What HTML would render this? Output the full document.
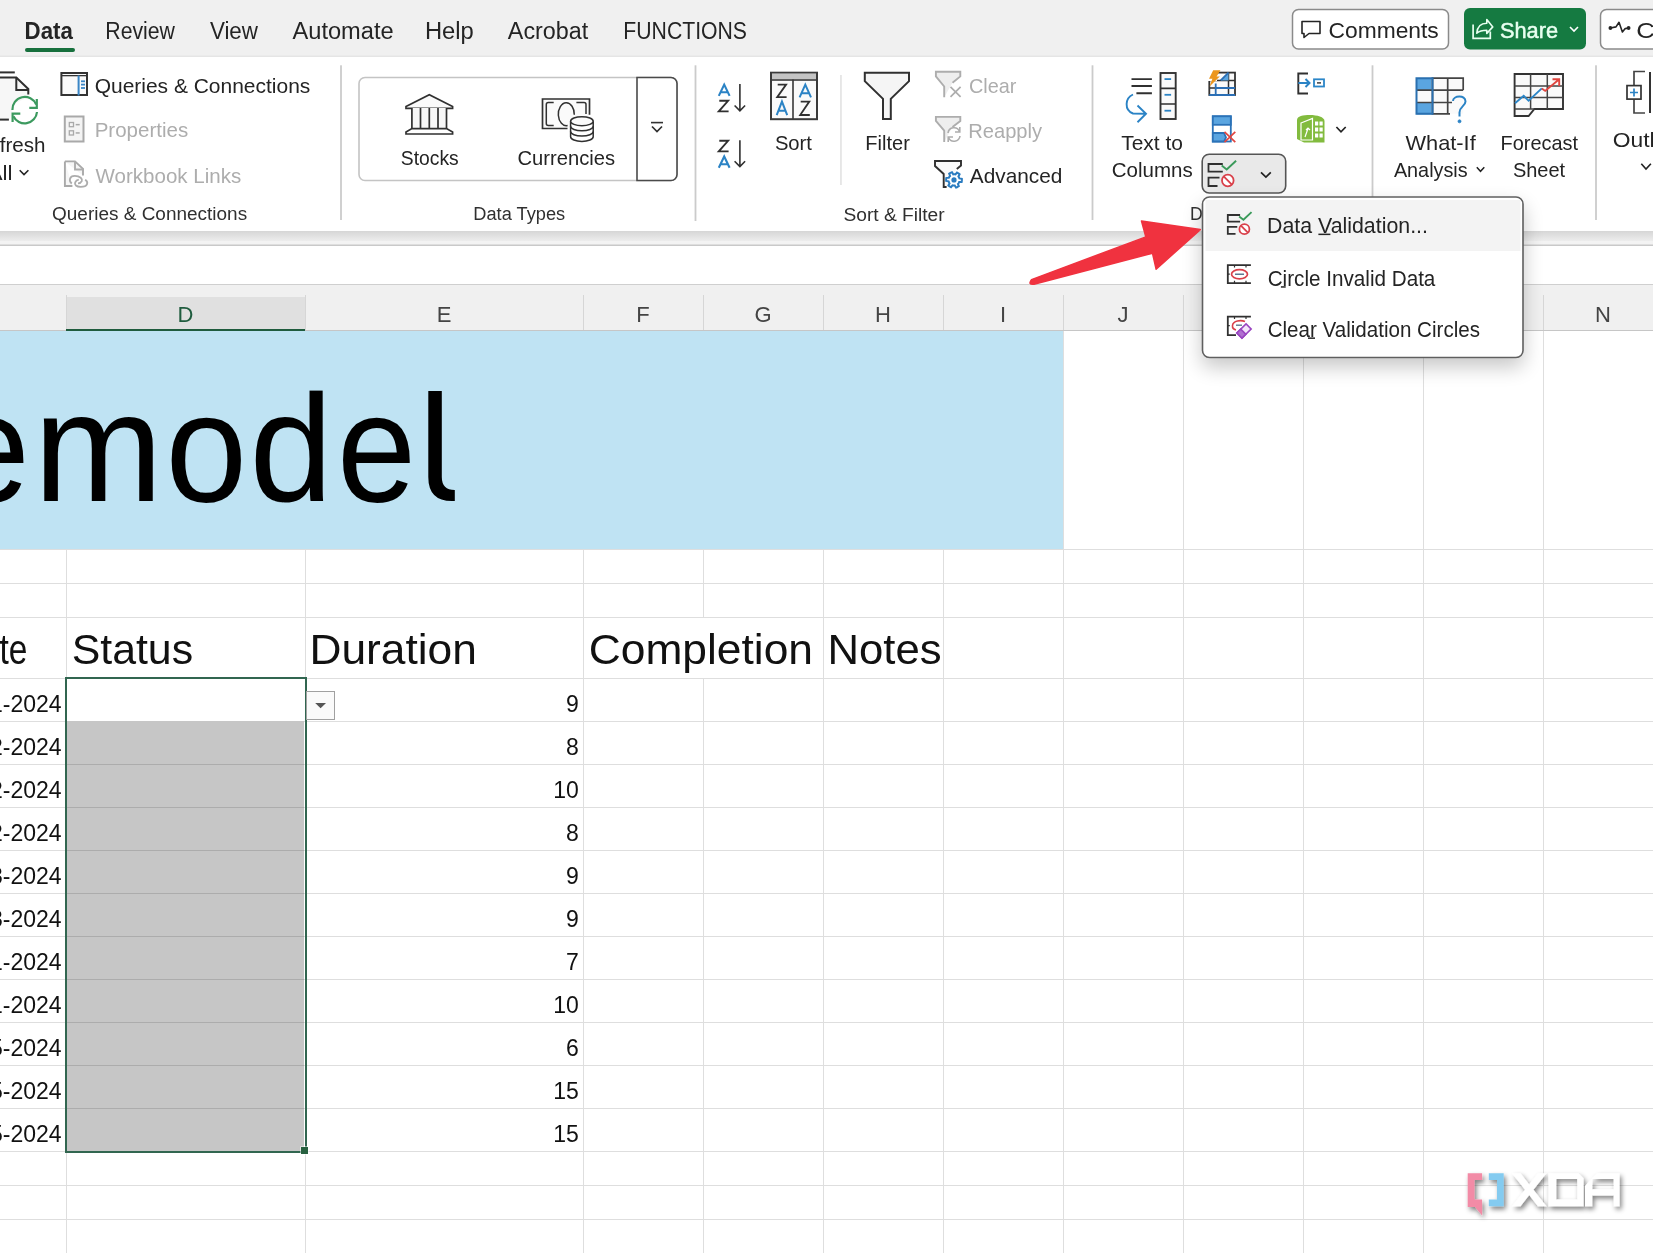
<!DOCTYPE html>
<html><head><meta charset="utf-8"><style>
html,body{margin:0;padding:0;background:#fff;overflow:hidden}
svg{display:block;will-change:transform}
text{font-family:"Liberation Sans",sans-serif}
</style></head><body>
<svg width="1653" height="1253" viewBox="0 0 1653 1253">
<rect x="0" y="0" width="1653" height="57" fill="#f0f0f0"/>
<text x="24.55" y="39" font-size="23" fill="#242424" font-weight="bold" textLength="48.28" lengthAdjust="spacingAndGlyphs">Data</text>
<text x="105.30" y="39" font-size="23" fill="#242424" textLength="69.68" lengthAdjust="spacingAndGlyphs">Review</text>
<text x="209.89" y="39" font-size="23" fill="#242424" textLength="48.10" lengthAdjust="spacingAndGlyphs">View</text>
<text x="292.48" y="39" font-size="23" fill="#242424" textLength="101.19" lengthAdjust="spacingAndGlyphs">Automate</text>
<text x="424.90" y="39" font-size="23" fill="#242424" textLength="48.89" lengthAdjust="spacingAndGlyphs">Help</text>
<text x="507.88" y="39" font-size="23" fill="#242424" textLength="80.27" lengthAdjust="spacingAndGlyphs">Acrobat</text>
<text x="623.30" y="39" font-size="23" fill="#242424" textLength="123.72" lengthAdjust="spacingAndGlyphs">FUNCTIONS</text>
<rect x="25" y="48" width="50" height="4" rx="2" fill="#17703d"/>
<rect x="1292.5" y="9.5" width="156" height="39.5" rx="6" fill="#fff" stroke="#8a8a8a" stroke-width="1.5"/>
<path d="M1302 21.5h18v12h-11l-5 4v-4h-2z" fill="none" stroke="#242424" stroke-width="1.6" stroke-linejoin="round"/>
<text x="1328.46" y="37.5" font-size="22" fill="#242424" textLength="110.33" lengthAdjust="spacingAndGlyphs">Comments</text>
<rect x="1464" y="8" width="122" height="41.5" rx="6" fill="#157a41"/>
<path d="M1473.1 24.6V38.3H1490.3V31.4" fill="none" stroke="#e8fff0" stroke-width="1.7"/>
<path d="M1476.8 33.2C1477.3 26.5 1481 23.2 1486.8 23.2V19.6L1492.8 26.9 1486.8 33.4V30.2C1482.5 30.2 1479.3 31 1476.8 33.2Z" fill="none" stroke="#e8fff0" stroke-width="1.6" stroke-linejoin="round"/>
<text x="1500.02" y="37.5" font-size="22" fill="#e8fff0" textLength="58.04" lengthAdjust="spacingAndGlyphs" stroke="#e8fff0" stroke-width="0.5">Share</text>
<path d="M1570 27l4 4 4-4" fill="none" stroke="#fff" stroke-width="1.6"/>
<rect x="1600.5" y="9.5" width="80" height="39.5" rx="6" fill="#fff" stroke="#8a8a8a" stroke-width="1.5"/>
<path d="M1610.4 28L1616 26.9 1619 22.3 1622.4 32 1625.2 28.6 1628.6 28" fill="none" stroke="#242424" stroke-width="1.6" stroke-linejoin="round"/>
<circle cx="1610.4" cy="28" r="1.9" fill="#242424"/><circle cx="1628.6" cy="28" r="1.9" fill="#242424"/>
<text x="1636.21" y="37.5" font-size="22" fill="#242424" textLength="32.87" lengthAdjust="spacingAndGlyphs">Ca</text>
<rect x="0" y="57" width="1653" height="174" fill="#ffffff"/>
<rect x="0" y="55.5" width="1653" height="1.5" fill="#e5e5e5"/>
<defs><linearGradient id="sh" x1="0" y1="0" x2="0" y2="1"><stop offset="0" stop-color="#d6d6d6"/><stop offset="1" stop-color="#ededed"/></linearGradient></defs>
<rect x="0" y="231" width="1653" height="14" fill="#f3f3f3"/>
<rect x="0" y="231" width="1653" height="10" fill="url(#sh)"/>
<rect x="0" y="244.5" width="1653" height="1.5" fill="#c9c9c9"/>
<rect x="0" y="246" width="1653" height="38" fill="#ffffff"/>
<rect x="0" y="284" width="1653" height="1" fill="#cfcfcf"/>
<rect x="0" y="285" width="1653" height="46" fill="#f0f0f0"/>
<rect x="66" y="297" width="239" height="34" fill="#e0e0e0"/>
<rect x="66" y="295" width="1" height="36" fill="#d6d6d6"/>
<rect x="305" y="295" width="1" height="36" fill="#d6d6d6"/>
<rect x="583" y="295" width="1" height="36" fill="#d6d6d6"/>
<rect x="703" y="295" width="1" height="36" fill="#d6d6d6"/>
<rect x="823" y="295" width="1" height="36" fill="#d6d6d6"/>
<rect x="943" y="295" width="1" height="36" fill="#d6d6d6"/>
<rect x="1063" y="295" width="1" height="36" fill="#d6d6d6"/>
<rect x="1183" y="295" width="1" height="36" fill="#d6d6d6"/>
<rect x="1303" y="295" width="1" height="36" fill="#d6d6d6"/>
<rect x="1423" y="295" width="1" height="36" fill="#d6d6d6"/>
<rect x="1543" y="295" width="1" height="36" fill="#d6d6d6"/>
<rect x="0" y="330" width="1653" height="1" fill="#c6c6c6"/>
<rect x="66" y="329" width="239" height="2" fill="#1f5c3e"/>
<text x="185.5" y="321.5" font-size="22" fill="#1f5c3e" text-anchor="middle">D</text>
<text x="444" y="321.5" font-size="22" fill="#444444" text-anchor="middle">E</text>
<text x="643" y="321.5" font-size="22" fill="#444444" text-anchor="middle">F</text>
<text x="763" y="321.5" font-size="22" fill="#444444" text-anchor="middle">G</text>
<text x="883" y="321.5" font-size="22" fill="#444444" text-anchor="middle">H</text>
<text x="1003" y="321.5" font-size="22" fill="#444444" text-anchor="middle">I</text>
<text x="1123" y="321.5" font-size="22" fill="#444444" text-anchor="middle">J</text>
<text x="1243" y="321.5" font-size="22" fill="#444444" text-anchor="middle">K</text>
<text x="1363" y="321.5" font-size="22" fill="#444444" text-anchor="middle">L</text>
<text x="1483" y="321.5" font-size="22" fill="#444444" text-anchor="middle">M</text>
<text x="1603" y="321.5" font-size="22" fill="#444444" text-anchor="middle">N</text>
<rect x="0" y="331" width="1063" height="218" fill="#bfe3f3"/>
<rect x="0" y="549" width="1653" height="1" fill="#dedede"/>
<rect x="0" y="583" width="1653" height="1" fill="#dedede"/>
<rect x="0" y="617" width="1653" height="1" fill="#dedede"/>
<rect x="0" y="678" width="1653" height="1" fill="#dedede"/>
<rect x="0" y="721" width="1653" height="1" fill="#dedede"/>
<rect x="0" y="764" width="1653" height="1" fill="#dedede"/>
<rect x="0" y="807" width="1653" height="1" fill="#dedede"/>
<rect x="0" y="850" width="1653" height="1" fill="#dedede"/>
<rect x="0" y="893" width="1653" height="1" fill="#dedede"/>
<rect x="0" y="936" width="1653" height="1" fill="#dedede"/>
<rect x="0" y="979" width="1653" height="1" fill="#dedede"/>
<rect x="0" y="1022" width="1653" height="1" fill="#dedede"/>
<rect x="0" y="1065" width="1653" height="1" fill="#dedede"/>
<rect x="0" y="1108" width="1653" height="1" fill="#dedede"/>
<rect x="0" y="1151" width="1653" height="1" fill="#dedede"/>
<rect x="0" y="1185" width="1653" height="1" fill="#dedede"/>
<rect x="0" y="1219" width="1653" height="1" fill="#dedede"/>
<rect x="66" y="549" width="1" height="704" fill="#dedede"/>
<rect x="305" y="549" width="1" height="704" fill="#dedede"/>
<rect x="583" y="549" width="1" height="704" fill="#dedede"/>
<rect x="703" y="549" width="1" height="68" fill="#dedede"/>
<rect x="703" y="678" width="1" height="575" fill="#dedede"/>
<rect x="823" y="549" width="1" height="704" fill="#dedede"/>
<rect x="943" y="549" width="1" height="704" fill="#dedede"/>
<rect x="1063" y="549" width="1" height="704" fill="#dedede"/>
<rect x="1183" y="549" width="1" height="704" fill="#dedede"/>
<rect x="1303" y="549" width="1" height="704" fill="#dedede"/>
<rect x="1423" y="549" width="1" height="704" fill="#dedede"/>
<rect x="1543" y="549" width="1" height="704" fill="#dedede"/>
<rect x="1063" y="331" width="1" height="218" fill="#dedede"/>
<rect x="1183" y="331" width="1" height="218" fill="#dedede"/>
<rect x="1303" y="331" width="1" height="218" fill="#dedede"/>
<rect x="1423" y="331" width="1" height="218" fill="#dedede"/>
<rect x="1543" y="331" width="1" height="218" fill="#dedede"/>
<text x="-49.71" y="501" font-size="155" fill="#000000" textLength="79.51" lengthAdjust="spacingAndGlyphs" stroke="#000000" stroke-width="0.01" stroke-linejoin="round">e</text>
<text x="33.50" y="501" font-size="155" fill="#000000" textLength="129.47" lengthAdjust="spacingAndGlyphs" stroke="#000000" stroke-width="0.01" stroke-linejoin="round">m</text>
<text x="165.44" y="501" font-size="155" fill="#000000" textLength="81.60" lengthAdjust="spacingAndGlyphs" stroke="#000000" stroke-width="0.01" stroke-linejoin="round">o</text>
<text x="249.51" y="501" font-size="155" fill="#000000" textLength="83.29" lengthAdjust="spacingAndGlyphs" stroke="#000000" stroke-width="0.01" stroke-linejoin="round">d</text>
<text x="336.92" y="501" font-size="155" fill="#000000" textLength="79.04" lengthAdjust="spacingAndGlyphs" stroke="#000000" stroke-width="0.01" stroke-linejoin="round">e</text>
<rect x="300" y="380" width="30" height="10.6" fill="#bfe3f3"/>
<path d="M428.3 390.9H441.8V477Q441.8 490 454.8 490V501Q428.3 502.5 428.3 477Z" fill="#000"/>
<text x="-0.50" y="664" font-size="43" fill="#111111" textLength="27.98" lengthAdjust="spacingAndGlyphs">te</text>
<text x="71.67" y="664" font-size="43" fill="#111111" textLength="121.43" lengthAdjust="spacingAndGlyphs">Status</text>
<text x="309.46" y="664" font-size="43" fill="#111111" textLength="167.42" lengthAdjust="spacingAndGlyphs">Duration</text>
<text x="588.78" y="664" font-size="43" fill="#111111" textLength="224.24" lengthAdjust="spacingAndGlyphs">Completion</text>
<text x="827.51" y="664" font-size="43" fill="#111111" textLength="114.13" lengthAdjust="spacingAndGlyphs">Notes</text>
<rect x="67" y="721" width="237" height="430" fill="#c6c6c6"/>
<rect x="67" y="764" width="237" height="1" fill="#acacac"/>
<rect x="67" y="807" width="237" height="1" fill="#acacac"/>
<rect x="67" y="850" width="237" height="1" fill="#acacac"/>
<rect x="67" y="893" width="237" height="1" fill="#acacac"/>
<rect x="67" y="936" width="237" height="1" fill="#acacac"/>
<rect x="67" y="979" width="237" height="1" fill="#acacac"/>
<rect x="67" y="1022" width="237" height="1" fill="#acacac"/>
<rect x="67" y="1065" width="237" height="1" fill="#acacac"/>
<rect x="67" y="1108" width="237" height="1" fill="#acacac"/>
<rect x="66" y="678" width="240" height="474" fill="none" stroke="#316650" stroke-width="2"/>
<rect x="300.5" y="1146.5" width="8" height="8" fill="#fff"/>
<rect x="301" y="1147" width="7" height="7" fill="#27603f"/>
<rect x="306.5" y="691.5" width="28" height="28" fill="#fafafa" stroke="#a0a0a0" stroke-width="1"/>
<path d="M315.2 703h10.8l-5.4 5.2z" fill="#555"/>
<text x="578.8" y="711.6" font-size="23" fill="#111111" text-anchor="end">9</text>
<text x="61.6" y="711.6" font-size="23" fill="#111111" text-anchor="end">01-2024</text>
<text x="578.8" y="754.6" font-size="23" fill="#111111" text-anchor="end">8</text>
<text x="61.6" y="754.6" font-size="23" fill="#111111" text-anchor="end">02-2024</text>
<text x="578.8" y="797.6" font-size="23" fill="#111111" text-anchor="end">10</text>
<text x="61.6" y="797.6" font-size="23" fill="#111111" text-anchor="end">02-2024</text>
<text x="578.8" y="840.6" font-size="23" fill="#111111" text-anchor="end">8</text>
<text x="61.6" y="840.6" font-size="23" fill="#111111" text-anchor="end">02-2024</text>
<text x="578.8" y="883.6" font-size="23" fill="#111111" text-anchor="end">9</text>
<text x="61.6" y="883.6" font-size="23" fill="#111111" text-anchor="end">03-2024</text>
<text x="578.8" y="926.6" font-size="23" fill="#111111" text-anchor="end">9</text>
<text x="61.6" y="926.6" font-size="23" fill="#111111" text-anchor="end">03-2024</text>
<text x="578.8" y="969.6" font-size="23" fill="#111111" text-anchor="end">7</text>
<text x="61.6" y="969.6" font-size="23" fill="#111111" text-anchor="end">01-2024</text>
<text x="578.8" y="1012.6" font-size="23" fill="#111111" text-anchor="end">10</text>
<text x="61.6" y="1012.6" font-size="23" fill="#111111" text-anchor="end">01-2024</text>
<text x="578.8" y="1055.6" font-size="23" fill="#111111" text-anchor="end">6</text>
<text x="61.6" y="1055.6" font-size="23" fill="#111111" text-anchor="end">05-2024</text>
<text x="578.8" y="1098.6" font-size="23" fill="#111111" text-anchor="end">15</text>
<text x="61.6" y="1098.6" font-size="23" fill="#111111" text-anchor="end">05-2024</text>
<text x="578.8" y="1141.6" font-size="23" fill="#111111" text-anchor="end">15</text>
<text x="61.6" y="1141.6" font-size="23" fill="#111111" text-anchor="end">05-2024</text>
<rect x="340.1" y="65.3" width="1.8" height="154.7" fill="#cbcbcb"/>
<rect x="694.6" y="65.3" width="1.8" height="155.7" fill="#cbcbcb"/>
<rect x="1091.6" y="65.3" width="1.8" height="154.7" fill="#cbcbcb"/>
<rect x="1371.6" y="65.3" width="1.8" height="134.7" fill="#cbcbcb"/>
<rect x="1595.1" y="65.3" width="1.8" height="154.7" fill="#cbcbcb"/>
<rect x="840.2" y="75" width="1.5" height="110" fill="#e0e0e0"/>
<path d="M0 72.4H14.8" fill="none" stroke="#303030" stroke-width="2" stroke-linejoin="miter" />
<path d="M0 77.6H16.3L28.3 88.9V97L14 104 10 119.6H0Z" fill="#f7f7f7" stroke="none"/>
<path d="M0 77.6H16.3L28.3 88.9V94.4" fill="none" stroke="#303030" stroke-width="2" stroke-linejoin="miter" />
<path d="M16.3 77.6V89.9H28.3" fill="none" stroke="#303030" stroke-width="2" stroke-linejoin="miter" />
<path d="M0 119.6H8.9" fill="none" stroke="#303030" stroke-width="2" stroke-linejoin="miter" />
<path d="M12.4 110A12.4 12.4 0 0 1 36.2 104.5" fill="none" stroke="#3c9a5f" stroke-width="2.2" stroke-linejoin="miter" />
<path d="M36.8 99V107.8H29.3" fill="none" stroke="#3c9a5f" stroke-width="2.2" stroke-linejoin="miter" />
<path d="M37 112A12.4 12.4 0 0 1 13.4 116.2" fill="none" stroke="#3c9a5f" stroke-width="2.2" stroke-linejoin="miter" />
<path d="M20.3 113.6H12.6V122" fill="none" stroke="#3c9a5f" stroke-width="2.2" stroke-linejoin="miter" />
<text x="-0.31" y="152.2" font-size="21" fill="#242424" textLength="45.71" lengthAdjust="spacingAndGlyphs">fresh</text>
<text x="-12.61" y="180" font-size="21" fill="#242424" textLength="25.11" lengthAdjust="spacingAndGlyphs">All</text>
<path d="M19.7 170.3L24 174.6 28.4 170.3" fill="none" stroke="#242424" stroke-width="1.6" stroke-linejoin="miter" />
<rect x="61.4" y="73" width="25.6" height="22" fill="#fafafa" stroke="#333" stroke-width="2"/>
<rect x="62" y="75" width="24.6" height="1.3" fill="#333"/>
<rect x="77.6" y="75.5" width="2" height="20" fill="#3a86c6"/>
<rect x="81" y="80.39999999999999" width="4" height="1.8" fill="#3a86c6"/>
<rect x="81" y="83.69999999999999" width="4" height="1.8" fill="#3a86c6"/>
<rect x="81" y="87.1" width="4" height="1.8" fill="#3a86c6"/>
<text x="94.66" y="92.6" font-size="21" fill="#242424" textLength="215.64" lengthAdjust="spacingAndGlyphs">Queries &amp; Connections</text>
<rect x="64.8" y="116.5" width="18.7" height="25" fill="#f4f4f4" stroke="#a9a9a9" stroke-width="2"/>
<rect x="69.3" y="122.5" width="4.2" height="4.2" fill="none" stroke="#a9a9a9" stroke-width="1.3"/>
<rect x="75.7" y="123.9" width="4" height="1.5" fill="#a9a9a9"/>
<rect x="69.3" y="130.8" width="4.2" height="4.2" fill="none" stroke="#a9a9a9" stroke-width="1.3"/>
<rect x="75.7" y="132.20000000000002" width="4" height="1.5" fill="#a9a9a9"/>
<text x="94.66" y="137.3" font-size="21" fill="#adadad" textLength="93.51" lengthAdjust="spacingAndGlyphs">Properties</text>
<path d="M64.9 161.4H75L83 168.8V175.4 M72.4 186H64.9V161.4" fill="#f6f6f6" stroke="#a9a9a9" stroke-width="1.9"/>
<path d="M75 161.4V169.5H83.5" fill="none" stroke="#adadad" stroke-width="1.9" stroke-linejoin="miter" />
<path d="M71.8 183.4C68.5 181 69.3 175.9 74.8 175.9 80.3 175.9 82.8 179 81.8 181.2 81 182.8 79.5 183.4 78 183.4" fill="none" stroke="#adadad" stroke-width="1.8" stroke-linejoin="miter" />
<path d="M85.1 179.8C88.6 181.8 88.2 186.8 80.7 186.8 76.2 186.8 74.2 184.8 75.2 182.3 75.9 180.6 77.2 179.8 78.8 179.6" fill="none" stroke="#adadad" stroke-width="1.8" stroke-linejoin="miter" />
<text x="95.50" y="182.8" font-size="21" fill="#adadad" textLength="145.74" lengthAdjust="spacingAndGlyphs">Workbook Links</text>
<text x="52.05" y="220.1" font-size="18" fill="#303030" textLength="195.09" lengthAdjust="spacingAndGlyphs">Queries &amp; Connections</text>
<rect x="359" y="77.5" width="318" height="103" rx="6" fill="#fff" stroke="#c4c4c4" stroke-width="1.6"/>
<path d="M637 77.5H671a6 6 0 0 1 6 6V174.5a6 6 0 0 1-6 6H637Z" fill="#fff" stroke="#4a4a4a" stroke-width="1.6"/>
<rect x="651" y="121.8" width="12" height="1.6" fill="#333"/>
<path d="M652 126.5L657 131.5 662 126.5" fill="none" stroke="#303030" stroke-width="1.7" stroke-linejoin="miter" />
<path d="M406 106.5L429.3 94.8 452.6 106.5V108.3H406Z" fill="#fafafa" stroke="#303030" stroke-width="1.7" stroke-linejoin="miter" />
<rect x="412" y="108" width="34" height="20" fill="#f7f7f7"/>
<rect x="411.04999999999995" y="108" width="1.7" height="20.5" fill="#303030"/>
<rect x="419.65" y="108" width="1.7" height="20.5" fill="#303030"/>
<rect x="428.45" y="108" width="1.7" height="20.5" fill="#303030"/>
<rect x="437.15" y="108" width="1.7" height="20.5" fill="#303030"/>
<rect x="445.65" y="108" width="1.7" height="20.5" fill="#303030"/>
<path d="M411.9 128.6H446.5L452.6 132V134H406V132Z" fill="#fff" stroke="#303030" stroke-width="1.7" stroke-linejoin="miter" />
<text x="400.83" y="164.6" font-size="21" fill="#242424" textLength="57.86" lengthAdjust="spacingAndGlyphs">Stocks</text>
<path d="M567.5 128.5H542.5V99H589.5V114.7" fill="#fafafa" stroke="#303030" stroke-width="1.7" stroke-linejoin="miter" />
<path d="M553.7 102.5H548.3Q546.3 102.5 546.3 104.5V123.5Q546.3 125.5 548.3 125.5H553.7" fill="none" stroke="#303030" stroke-width="1.5" stroke-linejoin="miter" />
<path d="M576.4 102.5H584Q586 102.5 586 104.5V114" fill="none" stroke="#303030" stroke-width="1.5" stroke-linejoin="miter" />
<path d="M567.6 125.6A8 11.5 0 1 1 574.3 114.8" fill="none" stroke="#303030" stroke-width="1.5" stroke-linejoin="miter" />
<path d="M570.6 121.2V136.8A11.3 4.6 0 0 0 593.2 136.8V121.2Z" fill="#fff" stroke="none"/>
<path d="M570.6 121.2V136.8A11.3 4.6 0 0 0 593.2 136.8V121.2" fill="none" stroke="#303030" stroke-width="1.5" stroke-linejoin="miter" />
<ellipse cx="581.9" cy="121.2" rx="11.3" ry="4.5" fill="#fafafa" stroke="#303030" stroke-width="1.5"/>
<path d="M570.6 126.3A11.3 4.5 0 0 0 593.2 126.3" fill="none" stroke="#303030" stroke-width="1.5" stroke-linejoin="miter" />
<path d="M570.6 131.5A11.3 4.5 0 0 0 593.2 131.5" fill="none" stroke="#303030" stroke-width="1.5" stroke-linejoin="miter" />
<text x="517.49" y="164.6" font-size="21" fill="#242424" textLength="97.62" lengthAdjust="spacingAndGlyphs">Currencies</text>
<text x="473.34" y="219.8" font-size="18" fill="#303030" textLength="91.80" lengthAdjust="spacingAndGlyphs">Data Types</text>
<path d="M718.8 95.9L724.2 84.6 729.6 95.9 M720.9599999999999 92.284H727.44" fill="none" stroke="#2b83c5" stroke-width="2.1" stroke-linejoin="miter" />
<path d="M719.3 100.8H728.1L718.8 111.4H728.6" fill="none" stroke="#303030" stroke-width="1.9" stroke-linejoin="miter" />
<path d="M739.9 84V111 M734.6 105.5L739.9 110.8 745.1 105.5" fill="none" stroke="#303030" stroke-width="1.6" stroke-linejoin="miter" />
<path d="M719.3 140.8H728.1L718.8 151.4H728.6" fill="none" stroke="#303030" stroke-width="1.9" stroke-linejoin="miter" />
<path d="M718.8 167.8L724.2 156.5 729.6 167.8 M720.9599999999999 164.184H727.44" fill="none" stroke="#2b83c5" stroke-width="2.1" stroke-linejoin="miter" />
<path d="M739.9 140.2V166.8 M734.6 161.2L739.9 166.5 745.1 161.2" fill="none" stroke="#303030" stroke-width="1.6" stroke-linejoin="miter" />
<rect x="771" y="72.7" width="46" height="46.5" fill="#fafafa" stroke="#3a3a3a" stroke-width="2"/>
<rect x="772" y="73.7" width="44" height="5.5" fill="#c4c4c4"/>
<rect x="771" y="79.2" width="46" height="1.6" fill="#3a3a3a"/>
<rect x="792.2" y="79.5" width="1.6" height="40" fill="#3a3a3a"/>
<path d="M777.7 84.6H786.1L777.2 97.2H786.6" fill="none" stroke="#303030" stroke-width="1.8" stroke-linejoin="miter" />
<path d="M776.7 115.2L781.95 101.6 787.2 115.2 M778.8000000000001 110.848H785.1" fill="none" stroke="#2b83c5" stroke-width="2" stroke-linejoin="miter" />
<path d="M799.6 97.4L805.3 84.6 811 97.4 M801.88 93.304H808.72" fill="none" stroke="#2b83c5" stroke-width="2" stroke-linejoin="miter" />
<path d="M800.7 101.6H809.3L800.2 115H809.8" fill="none" stroke="#303030" stroke-width="1.8" stroke-linejoin="miter" />
<text x="774.89" y="149.8" font-size="21" fill="#242424" textLength="37.09" lengthAdjust="spacingAndGlyphs">Sort</text>
<path d="M864.8 72.8H909V81.1L890.8 98.8V119H883V98.8L864.8 81.1Z" fill="#f5f5f5" stroke="#303030" stroke-width="2" stroke-linejoin="miter" />
<text x="865.30" y="149.6" font-size="21" fill="#242424" textLength="44.55" lengthAdjust="spacingAndGlyphs">Filter</text>
<path d="M952.5 82.7L960.3 76.4V71.7H935.9V76.4L944.2 86.5V97.2" fill="#eeeeee" stroke="#adadad" stroke-width="1.9" stroke-linejoin="miter" />
<path d="M950.5 86.8L960.6 96.9 M960.6 86.8L950.5 96.9" fill="none" stroke="#adadad" stroke-width="1.7" stroke-linejoin="miter" />
<text x="968.91" y="93.4" font-size="21" fill="#adadad" textLength="47.49" lengthAdjust="spacingAndGlyphs">Clear</text>
<path d="M952.5 127L960.3 121V116.9H935.9V121L944.2 130.5V142" fill="#eeeeee" stroke="#adadad" stroke-width="1.9" stroke-linejoin="miter" />
<path d="M948 133A6 6 0 0 1 959.5 131.5 M959.8 127V132H955 M960 136A6 6 0 0 1 948.5 137.5 M948.2 142V137H953" fill="none" stroke="#adadad" stroke-width="1.6" stroke-linejoin="miter" />
<text x="968.29" y="138" font-size="21" fill="#adadad" textLength="73.79" lengthAdjust="spacingAndGlyphs">Reapply</text>
<path d="M956.8 169L961 165.5V161H935V166L943.7 174V187H946.6" fill="#fafafa" stroke="#303030" stroke-width="1.9"/>
<path d="M961.90 179.90 L961.83 180.93 L961.63 181.94 L959.17 182.04 L958.85 182.70 L958.44 183.31 L957.96 183.86 L958.81 186.17 L957.95 186.74 L957.02 187.20 L956.04 187.53 L954.73 185.45 L954.00 185.50 L953.27 185.45 L952.55 185.31 L950.98 187.20 L950.05 186.74 L949.19 186.17 L948.41 185.49 L949.56 183.31 L949.15 182.70 L948.83 182.04 L948.59 181.35 L946.17 180.93 L946.10 179.90 L946.17 178.87 L946.37 177.86 L948.83 177.76 L949.15 177.10 L949.56 176.49 L950.04 175.94 L949.19 173.63 L950.05 173.06 L950.98 172.60 L951.96 172.27 L953.27 174.35 L954.00 174.30 L954.73 174.35 L955.45 174.49 L957.02 172.60 L957.95 173.06 L958.81 173.63 L959.59 174.31 L958.44 176.49 L958.85 177.10 L959.17 177.76 L959.41 178.45 L961.83 178.87Z" fill="#fff" stroke="#2b7cc0" stroke-width="2"/>
<circle cx="954" cy="179.9" r="2.6" fill="#2b7cc0"/>
<text x="969.80" y="182.7" font-size="21" fill="#242424" textLength="92.62" lengthAdjust="spacingAndGlyphs">Advanced</text>
<text x="843.44" y="220.7" font-size="18" fill="#303030" textLength="101.23" lengthAdjust="spacingAndGlyphs">Sort &amp; Filter</text>
<path d="M1131.5 79.1H1151.9 M1131.5 86H1151.9 M1136.4 93.2H1151.9" fill="none" stroke="#303030" stroke-width="1.9" stroke-linejoin="miter" />
<path d="M1133 94.5C1125 98 1124 110 1133 113.5L1146 113.8 M1137.5 105.5L1146 113.8 1137.5 122.2" fill="none" stroke="#2b83c5" stroke-width="1.9" stroke-linejoin="miter" />
<rect x="1160.5" y="73" width="15.2" height="46" fill="#fafafa" stroke="#333" stroke-width="1.9"/>
<path d="M1160.5 88.4H1175.7 M1160.5 104H1175.7" fill="none" stroke="#303030" stroke-width="1.7" stroke-linejoin="miter" />
<rect x="1164.5" y="78.19999999999999" width="6.6" height="1.8" fill="#2b83c5"/>
<rect x="1164.5" y="93.89999999999999" width="6.6" height="1.8" fill="#2b83c5"/>
<rect x="1164.5" y="109.8" width="6.6" height="1.8" fill="#2b83c5"/>
<text x="1121.18" y="149.6" font-size="21" fill="#242424" textLength="61.77" lengthAdjust="spacingAndGlyphs">Text to</text>
<text x="1111.77" y="177.1" font-size="21" fill="#242424" textLength="80.96" lengthAdjust="spacingAndGlyphs">Columns</text>
<rect x="1209.3" y="72.6" width="25.7" height="22.4" fill="#fafafa" stroke="#333" stroke-width="1.8"/>
<path d="M1209.3 80.4H1235 M1209.3 88H1235 M1228.5 72.6V95" fill="none" stroke="#303030" stroke-width="1.5" stroke-linejoin="miter" />
<path d="M1220.7 80.4L1228.5 72.6V80.4Z" fill="#5aa5e0"/>
<path d="M1215.7 83.5V95 M1209.3 95H1235 M1215.7 88H1235 M1220.7 80.4L1228.5 72.6" fill="none" stroke="#2b6fb5" stroke-width="1.8" stroke-linejoin="miter" />
<rect x="1204" y="68" width="13" height="13" fill="#fff"/>
<path d="M1213.2 70.2H1220.4L1216.6 76.6H1219.8L1209.5 86.5 1212.4 78.8H1209Z" fill="#ec961c"/>
<rect x="1212.8" y="116.3" width="18" height="25.2" fill="#fff" stroke="#2b73b8" stroke-width="1.8"/>
<rect x="1212.8" y="116.3" width="18" height="8.5" fill="#5aa5e0" stroke="#2b73b8" stroke-width="1.8"/>
<path d="M1212.8 133H1224L1226 137.5 1224 141.5H1212.8Z" fill="#5aa5e0" stroke="#2b73b8" stroke-width="1.8"/>
<path d="M1224.5 131.8L1235.3 142.2 M1235.3 131.8L1224.5 142.2" fill="none" stroke="#e0453f" stroke-width="1.7" stroke-linejoin="miter" />
<path d="M1308 73.5H1298.3V93.5H1308" fill="none" stroke="#303030" stroke-width="1.9" stroke-linejoin="miter" />
<path d="M1298.3 83H1309.5 M1305.5 79L1309.5 83 1305.5 87" fill="none" stroke="#2b83c5" stroke-width="2" stroke-linejoin="miter" />
<rect x="1314" y="79.3" width="10" height="7.2" fill="#fff" stroke="#2b86c8" stroke-width="1.8"/>
<rect x="1317" y="82.2" width="4" height="1.4" fill="#333"/>
<path d="M1297 120C1297 116 1303 115 1310 115S1324.5 117 1324.5 121V142.4H1304L1297 139Z" fill="#82bb3e"/>
<path d="M1301 123L1312.5 118.5V140H1301Z" fill="none" stroke="#fff" stroke-width="1.2"/>
<rect x="1315" y="121.5" width="3.2" height="4" fill="#fff"/>
<rect x="1319.5" y="121.5" width="3.2" height="4" fill="#fff"/>
<rect x="1315" y="127.5" width="3.2" height="4" fill="#fff"/>
<rect x="1319.5" y="127.5" width="3.2" height="4" fill="#fff"/>
<rect x="1315" y="133.5" width="3.2" height="4" fill="#fff"/>
<rect x="1319.5" y="133.5" width="3.2" height="4" fill="#fff"/>
<path d="M1305 137L1308 128.5 M1306 130L1308 128 1310 130" fill="none" stroke="#fff" stroke-width="1.2" stroke-linejoin="miter" />
<path d="M1336.4 127L1341 131.8 1345.7 127" fill="none" stroke="#222" stroke-width="1.7" stroke-linejoin="miter" />
<rect x="1202.2" y="154.2" width="83.5" height="38.8" rx="7" fill="#e9e9e9" stroke="#555" stroke-width="1.6"/>
<path d="M1222.8 164H1208.5V171.7H1222.8" fill="none" stroke="#303030" stroke-width="1.8" stroke-linejoin="miter" /><path d="M1219.5 177.7H1208.5V186.0H1217.5" fill="none" stroke="#303030" stroke-width="1.8" stroke-linejoin="miter" /><path d="M1221.7 165.6L1226.7 169.5 1236.1 160.7" fill="none" stroke="#3a9a5a" stroke-width="1.9" stroke-linejoin="miter" /><circle cx="1227.80" cy="180.50" r="5.80" fill="#fff" stroke="#d9404a" stroke-width="1.8"/><path d="M1223.74 176.44L1231.86 184.56" fill="none" stroke="#d9404a" stroke-width="1.8" stroke-linejoin="miter" />
<path d="M1261 172.3L1265.9 177.1 1270.8 172.3" fill="none" stroke="#222" stroke-width="1.7" stroke-linejoin="miter" />
<text x="1190.09" y="219.7" font-size="18" fill="#303030" textLength="12.74" lengthAdjust="spacingAndGlyphs">D</text>
<rect x="1416.5" y="78.2" width="46.7" height="35.6" fill="#fafafa"/>
<rect x="1416.5" y="78.2" width="15" height="11.9" fill="#5aa5e0"/>
<rect x="1416.5" y="102.5" width="15" height="11.9" fill="#5aa5e0"/>
<path d="M1431.5 78.2H1463.2V90.1 M1416.5 90.1H1463.2 M1416.5 102.5H1452 M1431.5 113.8H1450 M1432.5 78.2V113.8 M1447.7 78.2V113.8" fill="none" stroke="#444" stroke-width="1.7" stroke-linejoin="miter" />
<path d="M1416.5 78.2H1432.5V113.8H1416.5Z" fill="none" stroke="#2a70b0" stroke-width="2" stroke-linejoin="miter" />
<path d="M1453 101C1453 95.5 1465.5 94.5 1465.5 101.5 1465.5 106 1459.5 106.5 1459.5 112.5V116.5" fill="none" stroke="#2b83c5" stroke-width="2" stroke-linejoin="miter" />
<circle cx="1459.5" cy="121.3" r="1.5" fill="#2b83c5" stroke="#2b83c5" stroke-width="0.8"/>
<text x="1405.49" y="149.5" font-size="21" fill="#242424" textLength="70.26" lengthAdjust="spacingAndGlyphs">What-If</text>
<text x="1393.90" y="177.3" font-size="21" fill="#242424" textLength="73.77" lengthAdjust="spacingAndGlyphs">Analysis</text>
<path d="M1476.8 167.2L1480.5 171.3 1484.3 167.2" fill="none" stroke="#222" stroke-width="1.5" stroke-linejoin="miter" />
<path d="M1514.6 74H1563V109H1534.4L1528.6 116H1514.6Z" fill="#fafafa" stroke="#333" stroke-width="1.9" stroke-linejoin="miter" />
<path d="M1530.6 74V109 M1547.3 74V109 M1514.6 86H1563 M1514.6 97.5H1563 M1514.6 109H1534.4" fill="none" stroke="#444" stroke-width="1.5" stroke-linejoin="miter" />
<path d="M1515 103.3L1523.7 95.9 1528.6 100.8 1541.8 88.4" fill="none" stroke="#2b86c8" stroke-width="1.9" stroke-linejoin="miter" />
<path d="M1541.8 88.4L1545.2 90.9 1558.6 79.8 M1552.5 79.3H1559.2V86" fill="none" stroke="#e0453f" stroke-width="1.9" stroke-linejoin="miter" />
<text x="1500.61" y="149.5" font-size="21" fill="#242424" textLength="77.50" lengthAdjust="spacingAndGlyphs">Forecast</text>
<text x="1512.90" y="177.3" font-size="21" fill="#242424" textLength="52.27" lengthAdjust="spacingAndGlyphs">Sheet</text>
<path d="M1645 71.5H1634V113H1645" fill="none" stroke="#444" stroke-width="1.7" stroke-linejoin="miter" />
<rect x="1627" y="85.6" width="14" height="13.5" fill="#fff" stroke="#333" stroke-width="1.7"/>
<path d="M1634 88.5V96.5 M1630 92.5H1638" fill="none" stroke="#2b83c5" stroke-width="1.7" stroke-linejoin="miter" />
<path d="M1650 72V113" fill="none" stroke="#333" stroke-width="2" stroke-linejoin="miter" />
<text x="1612.67" y="146.6" font-size="21" fill="#242424" textLength="41.90" lengthAdjust="spacingAndGlyphs">Outl</text>
<path d="M1641.3 163.8L1646 169 1650.9 163.8" fill="none" stroke="#222" stroke-width="1.6" stroke-linejoin="miter" />
<defs><filter id="msh" x="-30%" y="-30%" width="160%" height="180%"><feGaussianBlur in="SourceAlpha" stdDeviation="10"/><feOffset dy="9"/><feComponentTransfer><feFuncA type="linear" slope="0.22"/></feComponentTransfer><feMerge><feMergeNode/><feMergeNode in="SourceGraphic"/></feMerge></filter></defs>
<rect x="1202.5" y="197" width="320.5" height="160.5" rx="7" fill="#ffffff" stroke="#5f5f5f" stroke-width="1.6" filter="url(#msh)"/>
<rect x="1205.5" y="200" width="315" height="51" fill="#f3f3f3"/>
<path d="M1240.098 215H1227.8V221.622H1240.098" fill="none" stroke="#303030" stroke-width="1.8" stroke-linejoin="miter" /><path d="M1237.26 226.782H1227.8V233.92H1235.54" fill="none" stroke="#303030" stroke-width="1.8" stroke-linejoin="miter" /><path d="M1239.152 216.376L1243.452 219.73 1251.536 212.162" fill="none" stroke="#3a9a5a" stroke-width="1.9" stroke-linejoin="miter" /><circle cx="1244.40" cy="229.19" r="4.99" fill="#fff" stroke="#d9404a" stroke-width="1.8"/><path d="M1240.91 225.70L1247.89 232.68" fill="none" stroke="#d9404a" stroke-width="1.8" stroke-linejoin="miter" />
<text x="1266.99" y="233.3" font-size="21.5" fill="#242424" textLength="160.96" lengthAdjust="spacingAndGlyphs">Data Validation...</text>
<rect x="1318.4" y="233.6" width="12" height="1.5" fill="#242424"/>
<path d="M1250.9 265.2H1227.8V283.1H1250.9" fill="none" stroke="#303030" stroke-width="1.8" stroke-linejoin="miter" />
<path d="M1234.5 265.2V267.5 M1246 265.2V267.5 M1234.5 283.1V280.8 M1246 283.1V280.8 M1227.8 274.2H1229.8" fill="none" stroke="#303030" stroke-width="1.2" stroke-linejoin="miter" />
<ellipse cx="1239.5" cy="274.2" rx="8" ry="4.6" fill="#fff" stroke="#d9404a" stroke-width="1.7"/>
<rect x="1235" y="273.5" width="9" height="1.5" fill="#607890"/>
<text x="1267.67" y="285.9" font-size="21.5" fill="#242424" textLength="167.72" lengthAdjust="spacingAndGlyphs">Circle Invalid Data</text>
<rect x="1280.9" y="286.2" width="4.8" height="1.5" fill="#242424"/>
<path d="M1250.9 316.6H1227.8V335.2H1236" fill="none" stroke="#303030" stroke-width="1.8" stroke-linejoin="miter" />
<path d="M1234.5 316.6V319 M1246 316.6V319 M1227.8 325.6H1229.8" fill="none" stroke="#303030" stroke-width="1.2" stroke-linejoin="miter" />
<path d="M1245 321.5C1241 319.8 1233 320.5 1232.5 325.5 1232.2 328 1234 329.5 1236 330" fill="none" stroke="#d9404a" stroke-width="1.6" stroke-linejoin="miter" />
<rect x="1236" y="324.5" width="6" height="1.4" fill="#607890"/>
<g transform="translate(1244 331) rotate(-45)"><rect x="-6.5" y="-3.6" width="13" height="7.2" fill="#f3e6fa" stroke="#9a45c0" stroke-width="1.6"/><rect x="-6.5" y="-3.6" width="5.5" height="7.2" fill="#b070d0" stroke="#9a45c0" stroke-width="1.6"/></g>
<text x="1267.67" y="337.2" font-size="21.5" fill="#242424" textLength="212.33" lengthAdjust="spacingAndGlyphs">Clear Validation Circles</text>
<rect x="1308" y="337.4" width="7" height="1.5" fill="#242424"/>
<path d="M1031.5 279.6L1145.8 236.9 1141.5 221 1200.3 229.6 1156.1 269.2 1152.5 253.2 1034 284.2Q1027.5 285 1031.5 279.6Z" fill="#f0323f" stroke="#f0323f" stroke-width="1.5" stroke-linejoin="round"/>
<defs><filter id="xsh" x="-20%" y="-40%" width="150%" height="190%"><feGaussianBlur in="SourceAlpha" stdDeviation="2.4"/><feOffset dx="2" dy="3"/><feComponentTransfer><feFuncA type="linear" slope="0.5"/></feComponentTransfer><feMerge><feMergeNode/><feMergeNode in="SourceGraphic"/></feMerge></filter></defs>
<g filter="url(#xsh)">
<path d="M1467.7 1173.2H1482.1V1180H1474.5V1199.5H1482.1V1215.4L1475 1207H1467.7Z" fill="#f28ba6"/>
<path d="M1488.8 1173.2H1503.7V1206.2H1488.8V1199.5H1497V1180H1488.8Z" fill="#84cbf0"/>
<path d="M1512 1173.2H1520.5L1529.2 1184.5 1537.9 1173.2H1546.4L1533.4 1189.7 1546.4 1206.2H1537.9L1529.2 1195 1520.5 1206.2H1512L1525 1189.7Z" fill="#ffffff"/>
<path d="M1548.5 1173.2H1578.5L1583.5 1178.2V1206.2H1548.5ZM1556.2 1178.9V1199.5H1577.3V1178.9Z" fill="#ffffff" fill-rule="evenodd"/>
<path d="M1585 1206.2V1186L1597 1173.2H1619.5V1206.2H1613.8V1195.5H1592.2V1206.2ZM1592.2 1178.9V1189.2H1613.8V1178.9Z" fill="#ffffff" fill-rule="evenodd"/>
</g>
</svg>
</body></html>
